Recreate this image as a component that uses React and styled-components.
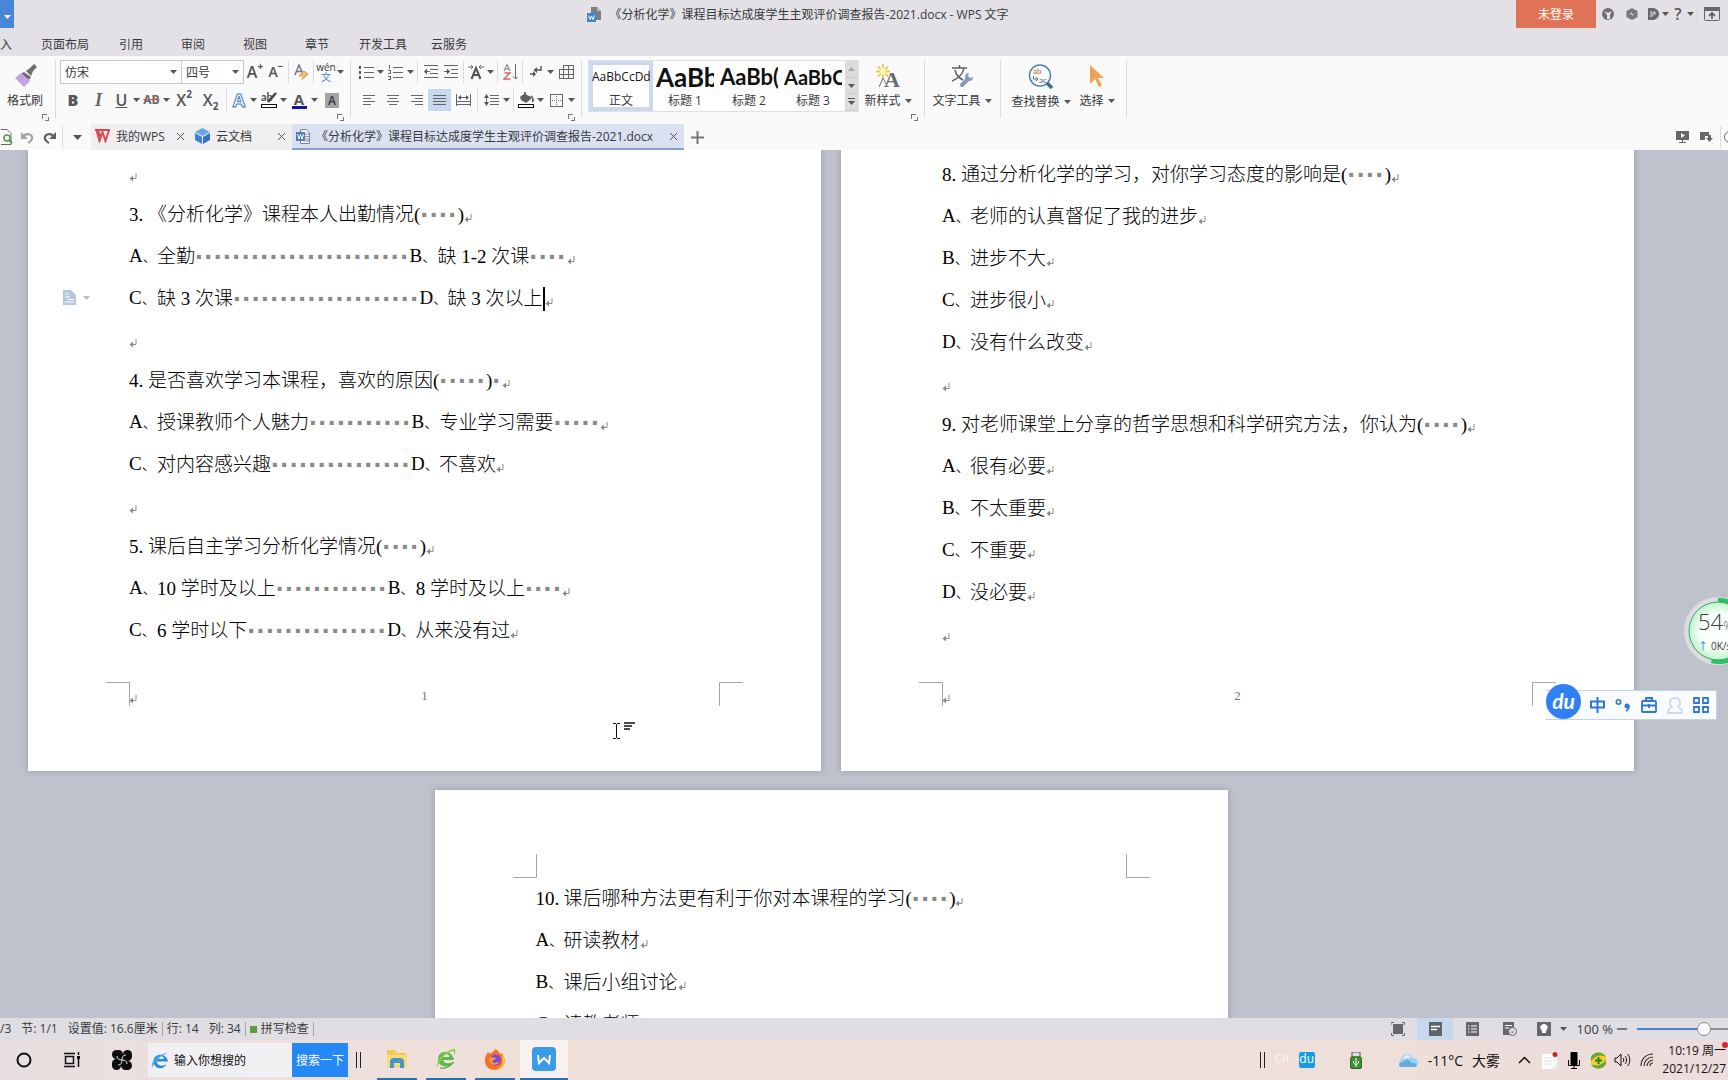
import React from 'react';
import styled, { createGlobalStyle, css } from 'styled-components';

const pageOne = [
    '',
    '3.《分析化学》课程本人出勤情况(····)',
    'A、全勤·······················B、缺 1-2 次课····',
    'C、缺 3 次课····················D、缺 3 次以上|',
    '',
    '4.是否喜欢学习本课程，喜欢的原因(·····)·',
    'A、授课教师个人魅力···········B、专业学习需要·····',
    'C、对内容感兴趣···············D、不喜欢',
    '',
    '5.课后自主学习分析化学情况(····)',
    'A、10 学时及以上············B、8 学时及以上····',
    'C、6 学时以下···············D、从来没有过',
];

const pageTwo = [
    '8.通过分析化学的学习，对你学习态度的影响是(····)',
    'A、老师的认真督促了我的进步',
    'B、进步不大',
    'C、进步很小',
    'D、没有什么改变',
    '',
    '9.对老师课堂上分享的哲学思想和科学研究方法，你认为(····)',
    'A、很有必要',
    'B、不太重要',
    'C、不重要',
    'D、没必要',
    '',
];

const pageThree = [
    '10.课后哪种方法更有利于你对本课程的学习(····)',
    'A、研读教材',
    'B、课后小组讨论',
    'C、请教老师',
];

const menus = ['页面布局', '引用', '审阅', '视图', '章节', '开发工具', '云服务'];

const docName = '《分析化学》课程目标达成度学生主观评价调查报告-2021.docx';

const Icon = ({ w = 16, h = 16, children, ...rest }) => (
    <svg width={w} height={h} viewBox={`0 0 ${w} ${h}`} fill="none" aria-hidden="true" {...rest}>
        {children}
    </svg>
);

const Arrow = ({ color = '#555' }) => (
    <Icon w={7} h={4}><path d="M0 0h7L3.5 4z" fill={color} /></Icon>
);

const CloseIcon = () => (
    <Icon w={9} h={9}><path d="M1 1l7 7M8 1L1 8" stroke="#555" /></Icon>
);

const Lines = ({ d, w = 14, h = 14, children }) => (
    <Icon w={w} h={h}>
        <path d={d} stroke="#666" strokeWidth="1" shapeRendering="crispEdges" />
        {children}
    </Icon>
);

const ReturnMark = () => (
    <Mark width="8" height="9" viewBox="0 0 8 9" aria-hidden="true">
        <path d="M7 0v5.5H1.5" stroke="#8a8a8a" fill="none" />
        <path d="M4 2.5L0.5 5.5 4 8.5z" fill="#8a8a8a" />
    </Mark>
);

const DocIcon = () => (
    <Icon w={14} h={15}>
        <path d="M4.5.5h6l3 3v11h-9z" fill="#eef1f6" stroke="#7c8798" />
        <path d="M9 5h4M9 7.500h4M9 10h4M9 12h4" stroke="#8b95a5" />
        <rect x="0" y="3" width="9" height="9" fill="#4f7fb5" />
        <path d="M1.500 5l1.500 5 1.500-4.500L6 10l1.500-5" stroke="#fff" />
    </Icon>
);

function Line({ text }) {
    const parts = text.split(/(·+|[A-D]、|^\d+\.|\|)/).filter(Boolean);
    return (
        <Paragraph $empty={!text}>
            {parts.map((part, i) => {
                if (part[0] === '·') return <Dots key={i}>{part}</Dots>;
                if (part === '|') return <TextCaret key={i} />;
                if (/^[A-D]、$/.test(part)) return <Marker key={i} $wide>{part[0]}<Comma>、</Comma></Marker>;
                if (/^\d+\.$/.test(part)) return <Marker key={i} $wide={part.length > 2}>{part}</Marker>;
                return <React.Fragment key={i}>{part}</React.Fragment>;
            })}
            <ReturnMark />
        </Paragraph>
    );
}

function Page({ lines, number, top }) {
    return (
        <Sheet>
            {top && <CropRow $top><Crop $side="left" $top /><Crop $side="right" $top /></CropRow>}
            <SheetBody $top={top}>
                {lines.map((line, i) => <Line key={i} text={line} />)}
            </SheetBody>
            {number && (
                <CropRow>
                    <Crop $side="left"><ReturnMark /></Crop>
                    <PageNumber>{number}</PageNumber>
                    <Crop $side="right" />
                </CropRow>
            )}
        </Sheet>
    );
}

function TitleBar() {
    return (
        <TitleRow>
            <AppMenu aria-label="应用菜单"><Arrow color="#fff" /></AppMenu>
            <WindowTitle>
                <Icon w={14} h={15}>
                    <path d="M4 0h6l4 4v9H4z" fill="#7d7d82" />
                    <path d="M10 0v4h4z" fill="#b9b9be" />
                    <rect x="0" y="6" width="9" height="9" fill="#3b87d6" />
                    <path d="M1.500 8.500l1.500 4L4.500 9 6 12.500l1.500-4" stroke="#fff" />
                </Icon>
                {docName} - WPS 文字
            </WindowTitle>
            <LoginButton>未登录</LoginButton>
            <TitleTools>
                <Tool $w={24} aria-label="皮肤">
                    <Icon w={12} h={12}><circle cx="6" cy="6" r="6" fill="#6e6e73" /><path d="M2 3l3 1.500h2L10 3 8 7v4H5V7z" fill="#e4e1e6" /></Icon>
                </Tool>
                <Tool $w={24} aria-label="设置">
                    <Icon w={12} h={12}><path d="M6 0l5.500 3v6L6 12 .5 9V3z" fill="#77777c" /><path d="M3 7l3-3v2.500L9 5 6 8V6z" fill="#dcdce0" /></Icon>
                </Tool>
                <Tool $w={18} aria-label="稻壳">
                    <Icon w={11} h={12}><path d="M0 0h5c8 1 8 11 0 12H0z" fill="#69696e" /><path d="M3 3v6l2-2V4l2 0v3" stroke="#e4e1e6" /></Icon>
                </Tool>
                <Tool $w={7} aria-label="稻壳选项"><Arrow /></Tool>
                <Tool $w={18} $glyph aria-label="帮助">?</Tool>
                <Tool $w={7} aria-label="帮助选项"><Arrow /></Tool>
                <Sep />
                <Tool $w={26} aria-label="隐藏功能区">
                    <Icon w={16} h={14}><rect x=".5" y=".5" width="15" height="13" rx="1" stroke="#66666b" /><path d="M0 0h16v4H0z" fill="#66666b" /><path d="M8 12V6.500M5 9l3-3 3 3" stroke="#55555a" strokeWidth="1.600" /></Icon>
                </Tool>
            </TitleTools>
        </TitleRow>
    );
}

function FontGroup() {
    return (
        <Group $pad="4px 6px 0 4px">
            <ToolRow $h={24}>
                <SelectBox $w={122}>
                    <select aria-label="字体" defaultValue="仿宋"><option>仿宋</option></select>
                    <Arrow />
                </SelectBox>
                <SelectBox $w={62} $joined>
                    <select aria-label="字号" defaultValue="四号"><option>四号</option></select>
                    <Arrow />
                </SelectBox>
                <Tool $w={22} $glyph aria-label="增大字号">A<Raised>+</Raised></Tool>
                <Tool $w={20} $glyph $small aria-label="减小字号">A<Raised>−</Raised></Tool>
                <Sep />
                <Tool $w={20} aria-label="清除格式">
                    <Icon w={15} h={16}>
                        <path d="M1 11L5 1l4 9M2.500 7.500h5" stroke="#75757f" strokeWidth="1.500" />
                        <path d="M5 12l5-5 4 3-5 5H7z" fill="#f3b878" stroke="#d99549" />
                        <path d="M6 12l3 3h-3l-1-2z" fill="#fff" />
                    </Icon>
                </Tool>
                <Sep />
                <Tool $w={20} $stack aria-label="拼音指南"><span>wén</span><em>文</em></Tool>
                <Tool $w={9} aria-label="拼音选项"><Arrow /></Tool>
            </ToolRow>
            <ToolRow $h={22}>
                <Tool $w={26} $glyph aria-label="加粗"><b>B</b></Tool>
                <Tool $w={25} $serif aria-label="倾斜"><i>I</i></Tool>
                <Tool $w={21} $glyph aria-label="下划线"><u>U</u></Tool>
                <Tool $w={9} aria-label="下划线选项"><Arrow /></Tool>
                <Tool $w={21} $strike aria-label="删除线">AB</Tool>
                <Tool $w={9} aria-label="删除线选项"><Arrow /></Tool>
                <Tool $w={26} $glyph aria-label="上标">X<Raised>2</Raised></Tool>
                <Tool $w={27} $glyph aria-label="下标">X<Raised $low>2</Raised></Tool>
                <Sep />
                <Tool $w={20} $outline aria-label="文字效果">A</Tool>
                <Tool $w={9} aria-label="文字效果选项"><Arrow /></Tool>
                <Tool $w={21} aria-label="突出显示">
                    <Icon w={16} h={16}>
                        <text x="0" y="9" fontSize="11" fontWeight="700" fontFamily="Lato, sans-serif" fill="#555">ab</text>
                        <path d="M15 1L7 10" stroke="#444" strokeWidth="2.500" />
                        <rect x=".5" y="12.500" width="15" height="3" fill="#fff" stroke="#111" />
                    </Icon>
                </Tool>
                <Tool $w={9} aria-label="突出显示选项"><Arrow /></Tool>
                <Tool $w={22} $fontColor aria-label="字体颜色">A</Tool>
                <Tool $w={9} aria-label="字体颜色选项"><Arrow /></Tool>
                <Tool $w={26} $shaded aria-label="字符底纹"><span>A</span></Tool>
            </ToolRow>
            <Launcher />
        </Group>
    );
}

function ParagraphGroup() {
    return (
        <Group $pad="4px 5px 0 6px">
            <ToolRow $h={24}>
                <Tool $w={19} aria-label="项目符号">
                    <Lines d="M5 2.500h10M5 7.500h10M5 12.500h10" w={15} h={15}><path d="M0 1h2v3H0zM0 6h2v3H0zM0 11h2v3H0z" fill="#555" /></Lines>
                </Tool>
                <Tool $w={9} aria-label="项目符号选项"><Arrow /></Tool>
                <Tool $w={21} aria-label="编号">
                    <Lines d="M5 2.500h10M5 7.500h10M5 12.500h10M1.500 0v4M0 5.500h2v3M0 8.500h3M0 11.500h2v3H0" w={15} h={15} />
                </Tool>
                <Tool $w={9} aria-label="编号选项"><Arrow /></Tool>
                <Sep />
                <Tool $w={21} aria-label="减少缩进">
                    <Lines d="M0 .5h14M6 4.500h8M6 8.500h8M0 12.500h14M2 6.500h4"><path d="M0 6.500l3-3v6z" fill="#555" /></Lines>
                </Tool>
                <Tool $w={20} aria-label="增加缩进">
                    <Lines d="M0 .5h14M7 4.500h7M7 8.500h7M0 12.500h14M0 6.500h4"><path d="M6 6.500l-3-3v6z" fill="#555" /></Lines>
                </Tool>
                <Sep />
                <Tool $w={20} aria-label="中文版式">
                    <Icon w={16} h={16}>
                        <path d="M3.500 15L8 4l4.500 11M5 11h6" stroke="#555" strokeWidth="2" />
                        <path d="M0 3h5M3 1l2 2-2 2M16 3h-5M13 1l-2 2 2 2" stroke="#666" />
                    </Icon>
                </Tool>
                <Tool $w={9} aria-label="中文版式选项"><Arrow /></Tool>
                <Sep />
                <Tool $w={20} aria-label="排序">
                    <Icon w={15} h={16}>
                        <path d="M1 7L4 .5 7 7M2 5h4" stroke="#77777c" />
                        <path d="M1.500 9h5.500l-6 6h6.500" stroke="#cc6666" strokeWidth="1.300" />
                        <path d="M12.500 0v15M10 12.500l2.500 2.500 2.500-2.500" stroke="#666" />
                    </Icon>
                </Tool>
                <Sep />
                <Tool $w={21} aria-label="显示段落标记">
                    <Icon w={14} h={14}>
                        <path d="M12 1v4H6M1 9h5" stroke="#555" strokeWidth="1.400" />
                        <path d="M8 2L4.500 5 8 8zM4 6v6l3-3z" fill="#555" />
                    </Icon>
                </Tool>
                <Tool $w={9} aria-label="段落标记选项"><Arrow /></Tool>
                <Tool $w={22} aria-label="表格">
                    <Lines d="M4.500 0v14M9.500 0v14M14.500 0v14M4 .5h11M0 4.500h15M0 9.500h15M0 13.500h15M.5 4v10" w={15} />
                </Tool>
            </ToolRow>
            <ToolRow $h={22}>
                <Tool $w={24} aria-label="左对齐"><Lines d="M0 1.500h12M0 4.500h8M0 7.500h12M0 10.500h8" w={12} h={12} /></Tool>
                <Tool $w={24} aria-label="居中"><Lines d="M0 1.500h12M2 4.500h8M0 7.500h12M2 10.500h8" w={12} h={12} /></Tool>
                <Tool $w={23} aria-label="右对齐"><Lines d="M0 1.500h12M4 4.500h8M0 7.500h12M4 10.500h8" w={12} h={12} /></Tool>
                <Tool $w={23} $active aria-label="两端对齐"><Lines d="M0 1.500h13M0 4.500h13M0 7.500h13M0 10.500h13" w={13} h={12} /></Tool>
                <Tool $w={24} aria-label="分散对齐">
                    <Lines d="M.5 0v12M14.500 0v12M3 3.500h9M0 7.500h15M0 10.500h15" w={15} h={12}><path d="M2 3.500l3-2.500v5zM13 3.500l-3-2.500v5z" fill="#555" /></Lines>
                </Tool>
                <Sep />
                <Tool $w={22} aria-label="行距">
                    <Lines d="M6 1.500h9M6 4.500h9M6 7.500h9M6 10.500h9M2.500 2v8" w={15} h={12}><path d="M0 4l2.500-4L5 4zM0 8l2.500 4L5 8z" fill="#555" /></Lines>
                </Tool>
                <Tool $w={9} aria-label="行距选项"><Arrow /></Tool>
                <Sep />
                <Tool $w={20} aria-label="底纹">
                    <Icon w={16} h={16}>
                        <path d="M2 5l5-3 6 3v2l-5 4-5-3z" fill="#5f5f64" />
                        <path d="M7 4V0M3 5l5-3M13 4c2 1 2 4 2 6" stroke="#5f5f64" strokeWidth="1.800" />
                        <rect x=".5" y="12.500" width="15" height="3" fill="#fff" stroke="#111" />
                    </Icon>
                </Tool>
                <Tool $w={9} aria-label="底纹选项"><Arrow /></Tool>
                <Tool $w={23} aria-label="边框">
                    <Icon w={13} h={13}>
                        <rect x=".5" y=".5" width="12" height="12" stroke="#666" />
                        <path d="M6.500 2v10M2 6.500h10" stroke="#777" strokeDasharray="1 1" />
                    </Icon>
                </Tool>
                <Tool $w={7} aria-label="边框选项"><Arrow /></Tool>
            </ToolRow>
            <Launcher />
        </Group>
    );
}

function Ribbon() {
    return (
        <RibbonBar>
            <Group $pad="4px 8px 0 2px">
                <BigTool $w={46}>
                    <Icon w={24} h={24}>
                        <path d="M13 7l4-3 4-4 3 3-4 4-2 5z" fill="#6c6c70" />
                        <path d="M11 8l7 5-2 3-8-6z" fill="#6c6c70" />
                        <path d="M8 9l9 8-6 6-9-9z" fill="#c4a2ea" />
                    </Icon>
                    <span>格式刷</span>
                </BigTool>
                <Launcher />
            </Group>
            <FontGroup />
            <ParagraphGroup />
            <Group $pad="4px 8px 0 6px">
                <BigRow>
                    <Gallery>
                        <StyleItem $selected><StyleSample $size={12}>AaBbCcDd</StyleSample>正文</StyleItem>
                        <StyleItem><StyleSample $size={26} $bold>AaBb</StyleSample>标题 1</StyleItem>
                        <StyleItem><StyleSample $size={22} $bold>AaBb(</StyleSample>标题 2</StyleItem>
                        <StyleItem><StyleSample $size={20} $bold>AaBbC</StyleSample>标题 3</StyleItem>
                        <GalleryScroll>
                            <button aria-label="上一行"><Icon w={7} h={4}><path d="M0 4h7L3.500 0z" fill="#aaa" /></Icon></button>
                            <button aria-label="下一行"><Arrow /></button>
                            <button aria-label="更多样式"><Icon w={7} h={8}><path d="M0 .5h7" stroke="#555" /><path d="M0 3h7L3.500 7z" fill="#555" /></Icon></button>
                        </GalleryScroll>
                    </Gallery>
                    <BigTool $w={58}>
                        <Icon w={26} h={24}>
                            <path d="M8 0v15M1 7.500h14M3 2.500l10 10M13 2.500l-10 10" stroke="#ecc94b" strokeWidth="1.800" strokeDasharray="4 1" />
                            <circle cx="8" cy="7.500" r="3" fill="#fff4b0" />
                            <text x="9" y="23" fontSize="22" fontWeight="700" fontFamily="Liberation Serif, serif" fill="#666a70">A</text>
                            <path d="M4 23l4-9 3 6" stroke="#777" />
                        </Icon>
                        <span>新样式<Arrow /></span>
                    </BigTool>
                </BigRow>
                <Launcher />
            </Group>
            <Group $pad="4px 8px 0 6px">
                <BigTool $w={62}>
                    <Icon w={24} h={24}>
                        <path d="M2 4h15M9.500 1v3M14 4c-1 6-5 10-12 13M5 6c1 5 4 8 8 10" stroke="#606064" strokeWidth="1.500" />
                        <path d="M12 21l6-6" stroke="#8b97bd" strokeWidth="4" strokeLinecap="round" />
                        <path d="M23 13a4 4 0 1 1-4-4l-1 3 2 2z" fill="#8b97bd" />
                    </Icon>
                    <span>文字工具<Arrow /></span>
                </BigTool>
            </Group>
            <Group $pad="4px 6px 0 8px">
                <BigRow>
                    <BigTool $w={64}>
                        <Icon w={26} h={25}>
                            <circle cx="12" cy="11.500" r="10.500" stroke="#4c82ab" strokeWidth="1.400" />
                            <path d="M19 19l5 5" stroke="#3c6fa0" strokeWidth="3.500" />
                            <text x="5" y="10" fontSize="8" fontFamily="Lato, sans-serif" fill="#c85f32">ab</text>
                            <text x="11" y="19" fontSize="8" fontFamily="Lato, sans-serif" fill="#3b6e9d">ac</text>
                            <path d="M5.500 12v3h4M8 13l2 2-2 2" stroke="#3b6e9d" />
                        </Icon>
                        <span>查找替换<Arrow /></span>
                    </BigTool>
                    <BigTool $w={48}>
                        <Icon w={16} h={24}>
                            <path d="M1 1v19l5-5 4 8 3-2-4-7h6z" fill="#f0a25c" />
                        </Icon>
                        <span>选择<Arrow /></span>
                    </BigTool>
                </BigRow>
            </Group>
        </RibbonBar>
    );
}

function TabBar() {
    return (
        <TabRow>
            <QuickTools>
                <Tool $w={16} aria-label="打印预览">
                    <Icon w={14} h={16}><path d="M0 .5h6l4 4v11H0" stroke="#666" /><circle cx="6" cy="9" r="3" stroke="#4b9a46" strokeWidth="1.400" /><path d="M8 11l3 3" stroke="#4b9a46" strokeWidth="2" /></Icon>
                </Tool>
                <Tool $w={22} aria-label="撤销">
                    <Icon w={13} h={13}><path d="M2 6c3-5 10-3 9 2-1 2-2 3-4 4" stroke="#a3a3a8" strokeWidth="2.200" /><path d="M0 1v7h7z" fill="#a3a3a8" /></Icon>
                </Tool>
                <Tool $w={22} aria-label="恢复">
                    <Icon w={13} h={13}><path d="M11 6C8 1 1 3 2 8c1 2 2 3 4 4" stroke="#606065" strokeWidth="2.200" /><path d="M13 1v7H6z" fill="#606065" /></Icon>
                </Tool>
                <Sep />
                <Tool $w={24} aria-label="自定义快速访问工具栏"><Icon w={9} h={5}><path d="M0 0h9L4.500 5z" fill="#555" /></Icon></Tool>
            </QuickTools>
            <Tab $w={100}>
                <button>
                    <Icon w={15} h={14}><path d="M0 1h15" stroke="#d9484c" strokeWidth="2" /><path d="M1.500 1l3 11L7.500 3l3 9 3.500-11M3 1l3 8" stroke="#dd4b50" strokeWidth="2" /></Icon>
                    我的WPS
                </button>
                <CloseTab aria-label="关闭我的WPS"><CloseIcon /></CloseTab>
            </Tab>
            <Tab $w={101}>
                <button>
                    <Icon w={15} h={16}><path d="M7.500 0L15 4 7.500 8 0 4z" fill="#6aa5f0" /><path d="M0 5l7 4v7l-7-4z" fill="#3e7de0" /><path d="M15 5L8 9v7l7-4z" fill="#3470d2" /></Icon>
                    云文档
                </button>
                <CloseTab aria-label="关闭云文档"><CloseIcon /></CloseTab>
            </Tab>
            <Tab $w={392} $active>
                <button><DocIcon />{docName}</button>
                <CloseTab aria-label="关闭文档"><CloseIcon /></CloseTab>
            </Tab>
            <Tool $w={26} aria-label="新建"><Icon w={13} h={13}><path d="M6.500 0v13M0 6.500h13" stroke="#777" strokeWidth="2" /></Icon></Tool>
            <TabTools>
                <Tool $w={24} aria-label="播放">
                    <Icon w={13} h={12}><path d="M0 0h13v9H0zM3 11h7v1H3zM6 9h1v2H6z" fill="#66666b" /><path d="M5 2l4 2.500L5 7z" fill="#fafafa" /></Icon>
                </Tool>
                <Tool $w={24} aria-label="窗口排列">
                    <Icon w={13} h={12}><path d="M0 1h9v4H5v4H0z" fill="#66666b" /><path d="M6 7h7l-3.500 4zM8 4h3v3H8z" fill="#66666b" /></Icon>
                </Tool>
                <Sep />
                <Icon w={5} h={12}><circle cx="7" cy="6" r="5.500" stroke="#666" /></Icon>
            </TabTools>
        </TabRow>
    );
}

function StatusBar() {
    return (
        <StatusRow>
            <StatusText>/3</StatusText>
            <StatusText>节: 1/1</StatusText>
            <StatusText>设置值: 16.6厘米</StatusText>
            <StatusText $rule>行: 14</StatusText>
            <StatusText>列: 34</StatusText>
            <StatusText $rule><SpellDot />拼写检查</StatusText>
            <StatusText $rule>&nbsp;</StatusText>
            <ViewTools>
                <Tool $w={38} aria-label="全屏显示">
                    <Icon w={14} h={14}><rect x="2" y="2" width="10" height="10" fill="#66666b" /><path d="M0 3V.5h3M11 .5h2.500V3M13.500 11v2.500H11M3 13.500H.5V11" stroke="#66666b" /></Icon>
                </Tool>
                <Tool $w={36} $active aria-label="页面视图">
                    <Icon w={13} h={14}><path d="M0 0h13v14H0z" fill="#5f646c" /><path d="M2 4.500h9M2 7.500h6" stroke="#fff" strokeWidth="1.400" /></Icon>
                </Tool>
                <Tool $w={38} aria-label="大纲视图">
                    <Icon w={13} h={14}><path d="M0 0h13v14H0z" fill="#66666b" /><path d="M2 4h1.500M5 4h6M2 7h1.500M5 7h6M2 10h1.500M5 10h6" stroke="#fff" strokeWidth="1.200" /></Icon>
                </Tool>
                <Tool $w={38} aria-label="Web版式">
                    <Icon w={14} h={14}><path d="M0 0h11v13H0z" fill="#66666b" /><path d="M2 3.500h7M2 6h4" stroke="#fff" /><circle cx="9.500" cy="9.500" r="4" fill="#e0dee3" stroke="#66666b" /><path d="M8 9.500h3l-2 2z" fill="#66666b" /></Icon>
                </Tool>
                <Tool $w={30} aria-label="护眼模式">
                    <Icon w={14} h={14}><path d="M0 0h14v14H0z" fill="#66666b" /><path d="M5 11V9c-4-5 0-7 2-7s6 2 2 7v2z" fill="#fff" /></Icon>
                </Tool>
                <Tool $w={8} aria-label="护眼选项"><Arrow /></Tool>
                <ZoomText>100 %</ZoomText>
                <Tool $w={18} aria-label="缩小"><Icon w={10} h={2}><path d="M0 0h10v2H0z" fill="#77777c" /></Icon></Tool>
                <ZoomSlider type="range" min="0" max="100" defaultValue="75" aria-label="显示比例" />
            </ViewTools>
        </StatusRow>
    );
}

function TaskBar() {
    return (
        <TaskRow>
            <TaskButton $w={48} aria-label="语音助手"><Icon w={16} h={16}><circle cx="8" cy="8" r="6.500" stroke="#111" strokeWidth="2" /></Icon></TaskButton>
            <TaskButton $w={48} aria-label="任务视图">
                <Icon w={17} h={16}><path d="M0 1.500h11M0 14.500h11M1.500 4.500h8v7h-8zM14.500 0v3M14.500 7v8" stroke="#111" strokeWidth="1.500" /><path d="M13 4h3v3h-3z" fill="#111" /></Icon>
            </TaskButton>
            <TaskButton $w={52} aria-label="启动器">
                <Icon w={20} h={20}>
                    <rect x="0" y="0" width="11" height="9" rx="4.500" fill="#0b0b0b" />
                    <rect x="11" y="0" width="9" height="11" rx="4.500" fill="#0b0b0b" />
                    <rect x="9" y="11" width="11" height="9" rx="4.500" fill="#0b0b0b" />
                    <rect x="0" y="9" width="9" height="11" rx="4.500" fill="#0b0b0b" />
                    <path d="M5 5h10v10H5z" fill="#0b0b0b" />
                    <path d="M10 10c-3 0-5-1-5-4M10 10c0-3 1-5 4-5M10 10c3 0 5 1 5 4M10 10c0 3-1 5-4 5" stroke="#eadbd7" />
                </Icon>
            </TaskButton>
            <SearchBox>
                <Icon w={19} h={19}>
                    <path d="M17 10.500H5.500c1 5 7 5 10 2.500-2 6-13 6-13-3 0-8 13-9 14.500.5z" fill="#2b8ade" />
                    <path d="M6 8h7c-1-4-6-4-7 0z" fill="#f0f0f2" />
                    <path d="M1 17C-1 10 9 2 18 2c-6 1-14 7-17 15z" fill="#4ba6ec" />
                </Icon>
                <input aria-label="搜索" defaultValue="输入你想搜的" />
                <button>搜索一下</button>
            </SearchBox>
            <Grip />
            <AppButtons>
                <TaskButton $w={40} $open aria-label="文件资源管理器">
                    <Icon w={22} h={20}><path d="M1 1h8l2 3h9v14H1z" fill="#f3cb54" /><path d="M1 6h20v11H1z" fill="#fadb78" /><path d="M4 19v-7c0-2 2-3 4-3h6c2 0 4 1 4 3v7h-4v-5H8v5z" fill="#4796c8" /></Icon>
                </TaskButton>
                <TaskButton $w={40} $open aria-label="浏览器">
                    <Icon w={20} h={22}><path d="M18 12H7c1 4 6 4 10 2-2 7-15 6-15-3S16 1 18 12z" fill="#5fb846" /><path d="M6.500 9h7c-1-4-6-3-7 0z" fill="#fff" /><path d="M1 20C-1 12 11 1 19 1c1 2 0 4-1 6 0-3 0-4-1-4C10 4 3 13 1 20z" fill="#8ad04f" /><path d="M4 20c6 1 11-2 14-6" stroke="#3f9638" /></Icon>
                </TaskButton>
                <TaskButton $w={40} $open aria-label="Firefox">
                    <Icon w={23} h={22}><path d="M11 22C4 22 0 17 1 11c0-3 2-5 3-7l2 2c2-2 4-2 5-5 3 1 4 3 5 5l2-1c4 5 5 16-7 17z" fill="#fb6f2c" /><path d="M18 5c4 5 5 16-7 17 10-4 7-10 7-17z" fill="#ffc63a" /><circle cx="11.500" cy="12" r="5.500" fill="#7a4bd6" /><path d="M5 10c3-2 4 0 7 0-1 2-3 2-4 3 1 3 5 2 7 0-1 6-10 5-10-3z" fill="#ff9a35" /></Icon>
                </TaskButton>
                <TaskButton $w={48} $open $current aria-label="WPS">
                    <Icon w={24} h={24}><rect width="24" height="24" rx="4" fill="#3a9bea" /><path d="M6 8l1 8 5-5 5 5 1-8" stroke="#fff" strokeWidth="2" /></Icon>
                </TaskButton>
            </AppButtons>
            <Tray>
                <Grip />
                <InputMode>CH</InputMode>
                <DuBadge>du</DuBadge>
                <UsbButton $w={58} aria-label="USB">
                    <Icon w={12} h={17}><path d="M2 0h8v5H2z" fill="#ddd" stroke="#555" /><rect x=".5" y="5" width="11" height="11.500" rx="1.500" fill="#3b922f" stroke="#286520" /><path d="M6 6v9M3.500 9v2L6 13l2.500-2V9" stroke="#fff" /></Icon>
                </UsbButton>
                <Weather>
                    <Icon w={22} h={16}><path d="M4 15a4 4 0 0 1 0-7c1-7 10-8 11-2 7-1 8 8 3 9z" fill="#9fd0ef" /><path d="M5 15c-5-1-3-5 1-5 3-4 8-2 8 1 5-1 7 3 4 4z" fill="#62ade0" /><path d="M6 7c1-5 7-5 8-1-4-1-5 1-8 1z" fill="#dff1fb" /></Icon>
                    <span>-11°C</span><span>大雾</span>
                </Weather>
                <TaskButton $w={28} aria-label="显示隐藏的图标"><Icon w={13} h={8}><path d="M1 7l5.500-5.500L12 7" stroke="#111" strokeWidth="1.500" /></Icon></TaskButton>
                <TaskButton $w={24} aria-label="便笺">
                    <Icon w={17} h={17}><path d="M0 2h14v15H0z" fill="#fff" /><path d="M11 5h5v11h-5" fill="#f4f4f4" stroke="#ddd" /><path d="M2 6h7M2 9h8M2 12h7" stroke="#ddd" /><circle cx="13" cy="2.500" r="2.500" fill="#cc2727" /></Icon>
                </TaskButton>
                <TaskButton $w={24} aria-label="麦克风"><Icon w={12} h={17}><rect x="2.500" width="7" height="13" rx="1" fill="#000" /><path d="M.5 8v5.500h11V8M6 13v3M3 16.500h6" stroke="#000" /></Icon></TaskButton>
                <TaskButton $w={24} aria-label="安全卫士"><Icon w={17} h={17}><circle cx="8.500" cy="8.500" r="8" fill="#f3d022" /><path d="M1 5c3-6 12-6 15 0-6-3-11-1-15 4zM16 12c-3 6-12 6-15 0 6 3 11 1 15-4z" fill="#5cab35" /><path d="M8.500 5v7M5 8.500h7" stroke="#277c25" strokeWidth="2" /></Icon></TaskButton>
                <TaskButton $w={24} aria-label="音量"><Icon w={17} h={14}><path d="M1 5v4h2l4 4V1L3 5z" stroke="#111" /><path d="M9 5c1 1 1 3 0 4M11 3c2 2 2 6 0 8M13.500 1c3 3 3 9 0 12" stroke="#111" /></Icon></TaskButton>
                <TaskButton $w={26} aria-label="网络"><Icon w={14} h={14}><path d="M1 13C1 6 6 1 13 1M4 13c0-5 4-9 9-9M7 13c0-3 3-6 6-6M10 13c0-2 1-3 3-3" stroke="#333" strokeWidth="1.200" /></Icon></TaskButton>
                <Clock><span>10:19 周一</span><span>2021/12/27</span><Notice /></Clock>
            </Tray>
        </TaskRow>
    );
}

function InputMethodBar() {
    return (
        <ImeBar>
            <ImeLogo>du</ImeLogo>
            <button aria-label="中文"><Icon w={15} h={16}><path d="M1 4.500h13v6H1zM7.500 0v16" stroke="#2f78d0" strokeWidth="2" /></Icon></button>
            <button aria-label="标点"><Icon w={16} h={16}><circle cx="3.500" cy="5" r="2.200" stroke="#2f78d0" strokeWidth="1.600" /><circle cx="12" cy="9" r="2.500" fill="#2f78d0" /><path d="M14 9c0 3-1 4-3 5" stroke="#2f78d0" strokeWidth="1.500" /></Icon></button>
            <button aria-label="工具箱"><Icon w={16} h={16}><rect x="1" y="4" width="14" height="11" rx="1" stroke="#2f78d0" strokeWidth="1.800" /><path d="M5 4V1h6v3M1 8.500h14M8 7v4" stroke="#2f78d0" strokeWidth="1.800" /></Icon></button>
            <button aria-label="账户"><Icon w={16} h={17}><path d="M5 10C1 6 3 1 8 1s7 5 3 9c3 1 4 3 4 6H1c0-3 1-5 4-6z" stroke="#c8dbf3" strokeWidth="1.800" /></Icon></button>
            <button aria-label="更多"><Icon w={16} h={16}><path d="M1 1h5v5H1zM10 1h5v5h-5zM1 10h5v5H1zM10 10h5v5h-5z" stroke="#2f78d0" strokeWidth="1.800" /></Icon></button>
        </ImeBar>
    );
}

function App() {
    return (
        <Window>
            <GlobalStyle />
            <TitleBar />
            <MenuRow>
                <MenuItem $clipped>入</MenuItem>
                {menus.map((menu) => <MenuItem key={menu}>{menu}</MenuItem>)}
            </MenuRow>
            <Ribbon />
            <TabBar />
            <Workspace>
                <Spread>
                    <Page lines={pageOne} number="1" />
                    <Page lines={pageTwo} number="2" />
                </Spread>
                <Spread>
                    <Page lines={pageThree} top />
                </Spread>
                <PasteHint aria-label="段落布局">
                    <Icon w={13} h={15}><path d="M0 0h8l5 5v10H0z" fill="#b4c6dc" /><path d="M2 4h4M2 7h5M5 9.500h6M2 12h9" stroke="#fff" /></Icon>
                    <Arrow color="#b5bcc8" />
                </PasteHint>
                <Pointer width="24" height="20" viewBox="0 0 24 20" fill="none" aria-hidden="true">
                    <path d="M0 2.500h3M4 2.500h3M3.500 3v14M0 17.500h3M4 17.500h3" stroke="#111" />
                    <path d="M11 2h11M11 5h8M11 8h6" stroke="#111" strokeWidth="1.500" />
                </Pointer>
            </Workspace>
            <StatusBar />
            <TaskBar />
            <InputMethodBar />
            <SpeedBall>
                <svg width="68" height="68" viewBox="0 0 68 68" aria-hidden="true">
                    <defs>
                        <radialGradient id="ball">
                            <stop offset="0.600" stopColor="#fbfffb" />
                            <stop offset="1" stopColor="#bdf3ca" />
                        </radialGradient>
                    </defs>
                    <circle cx="34" cy="34" r="34" fill="#dcdce2" />
                    <path d="M34 1a33 33 0 1 1-7 65l7-32z" fill="#2fc064" />
                    <circle cx="34" cy="34" r="29" fill="url(#ball)" stroke="#35ac60" />
                </svg>
                <BallText><strong>54<small>%</small></strong><span><i>↑</i>0K/s</span></BallText>
            </SpeedBall>
        </Window>
    );
}

const GlobalStyle = createGlobalStyle`
    * {
        box-sizing: border-box;
    }

    body {
        margin: 0;
        font-family: "Open Sans", "Noto Sans CJK SC", sans-serif;
        font-size: 12px;
        color: #39393c;
    }

    button, input, select {
        font: inherit;
        color: inherit;
        border: none;
        background: none;
        padding: 0;
        margin: 0;
    }

    svg {
        flex: none;
    }
`;

const Window = styled.div`
    position: relative;
    display: flex;
    flex-direction: column;
    height: 100vh;
    overflow: hidden;
    background: #fafafa;
`;

const TitleRow = styled.header`
    display: flex;
    align-items: stretch;
    height: 28px;
    flex: none;
    background: #e4e1e6;
`;

const AppMenu = styled.button`
    width: 14px;
    background: #4a86d8;
`;

const WindowTitle = styled.div`
    display: flex;
    flex: 1;
    align-items: center;
    justify-content: center;
    gap: 8px;
    padding-left: 66px;
    white-space: nowrap;
`;

const LoginButton = styled.button`
    width: 80px;
    background: #e07356;
    color: #fff;
`;

const TitleTools = styled.div`
    display: flex;
    align-items: center;
    width: 132px;
`;

const MenuRow = styled.nav`
    display: flex;
    height: 28px;
    flex: none;
    background: #e4e1e6;
`;

const MenuItem = styled.button`
    min-width: 62px;
    padding: 4px 11px 0;

    ${({ $clipped }) => $clipped && css`
        min-width: 30px;
        padding: 4px 0 0;
        text-align: left;
    `}
`;

const RibbonBar = styled.div`
    display: flex;
    height: 68px;
    flex: none;
    background: #fafafa;
`;

const Group = styled.div`
    position: relative;
    display: flex;
    flex-direction: column;
    gap: 5px;
    padding: ${({ $pad }) => $pad};

    &::after {
        content: '';
        position: absolute;
        right: 0;
        top: 4px;
        height: 58px;
        border-right: 1px solid #dcdcde;
    }
`;

const Launcher = styled.span`
    position: absolute;
    right: 9px;
    bottom: 5px;
    width: 5px;
    height: 5px;
    border-top: 1px solid #777;
    border-left: 1px solid #777;

    &::after {
        content: '';
        position: absolute;
        left: 2px;
        top: 2px;
        width: 3px;
        height: 3px;
        border-right: 1px solid #777;
        border-bottom: 1px solid #777;
    }
`;

const ToolRow = styled.div`
    display: flex;
    align-items: center;
    height: ${({ $h }) => $h}px;
`;

const Sep = styled.span`
    flex: none;
    width: 1px;
    height: 22px;
    margin: 0 2px;
    background: #dcdcde;
`;

const Raised = styled.sup`
    font-size: 10px;
    line-height: 10px;
    font-weight: 700;
    align-self: ${({ $low }) => ($low ? 'flex-end' : 'flex-start')};
`;

const Tool = styled.button`
    display: flex;
    flex: none;
    align-items: center;
    justify-content: center;
    width: ${({ $w }) => $w}px;
    height: 22px;
    line-height: 20px;

    ${({ $active }) => $active && css`
        background: #c7d7ee;
    `}

    ${({ $glyph, $small }) => $glyph && css`
        font-weight: 600;
        font-size: ${$small ? 14 : 16}px;
        color: #55555a;
    `}

    ${({ $serif }) => $serif && css`
        font-family: "Liberation Serif", serif;
        font-weight: 700;
        font-size: 18px;
        color: #66666a;
    `}

    ${({ $stack }) => $stack && css`
        flex-direction: column;
        line-height: 10px;
        font-size: 10px;

        em {
            font-style: normal;
            color: #4f83bd;
        }
    `}

    ${({ $strike }) => $strike && css`
        font-weight: 700;
        color: #66666a;
        text-decoration: line-through #d05555;
    `}

    ${({ $outline }) => $outline && css`
        font-weight: 700;
        font-size: 18px;
        color: #fff;
        -webkit-text-stroke: 1px #4a78c0;
    `}

    ${({ $fontColor }) => $fontColor && css`
        font-weight: 700;
        font-size: 15px;
        line-height: 14px;
        color: #55555a;
        height: 17px;
        background: linear-gradient(#1414a0, #1414a0) center bottom / 15px 3px no-repeat;
        padding-bottom: 3px;
    `}

    ${({ $shaded }) => $shaded && css`
        span {
            width: 14px;
            height: 15px;
            line-height: 15px;
            background: #a3a3a8;
            font-weight: 600;
        }
    `}
`;

const SelectBox = styled.div`
    display: flex;
    align-items: center;
    width: ${({ $w }) => $w}px;
    height: 24px;
    padding-right: 4px;
    border: 1px solid #c6c6ca;
    border-left-width: ${({ $joined }) => ($joined ? 0 : 1)}px;
    background: #fff;

    select {
        flex: 1;
        min-width: 0;
        padding-left: 4px;
        appearance: none;
        outline: none;
    }
`;

const BigRow = styled.div`
    display: flex;
`;

const BigTool = styled.button`
    display: flex;
    flex-direction: column;
    align-items: center;
    gap: 4px;
    width: ${({ $w }) => $w}px;
    padding-top: 4px;

    span {
        display: flex;
        align-items: center;
        gap: 4px;
        line-height: 18px;
        white-space: nowrap;
    }
`;

const Gallery = styled.div`
    display: flex;
    height: 52px;
    background: #fff;
    border: 1px solid #e0e0e3;
`;

const StyleItem = styled.button`
    display: flex;
    flex-direction: column;
    align-items: center;
    width: 64px;
    padding: 0 3px;
    overflow: hidden;
    line-height: 16px;
    box-shadow: ${({ $selected }) => ($selected ? 'inset 0 0 0 4px #ccd8ec' : 'none')};
`;

const StyleSample = styled.span`
    width: 58px;
    overflow: hidden;
    font-family: ${({ $bold }) => ($bold ? 'Lato' : '"Open Sans"')}, sans-serif;
    font-size: ${({ $size }) => $size}px;
    font-weight: ${({ $bold }) => ($bold ? 700 : 400)};
    line-height: 32px;
    height: 32px;
    white-space: nowrap;
    text-align: left;
    color: #111;
`;

const GalleryScroll = styled.div`
    display: flex;
    flex-direction: column;
    width: 13px;
    background: #dddde0;

    button {
        display: flex;
        flex: 1;
        align-items: center;
        justify-content: center;
        border-bottom: 1px solid #cbcbd0;
    }
`;

const TabRow = styled.div`
    display: flex;
    align-items: center;
    height: 26px;
    flex: none;
    background: #fafafa;
`;

const QuickTools = styled.div`
    display: flex;
    align-items: center;
    width: 91px;
`;

const Tab = styled.div`
    display: flex;
    align-items: center;
    justify-content: space-between;
    width: ${({ $w }) => $w}px;
    height: 26px;
    padding: 0 4px;
    background: ${({ $active }) => ($active ? '#dae2f1' : '#efeef1')};
    border-bottom: 2px solid ${({ $active }) => ($active ? '#8ba0c8' : '#efeef1')};

    button {
        display: flex;
        align-items: center;
        gap: 6px;
        white-space: nowrap;
    }
`;

const CloseTab = styled.button`
    justify-content: center;
    padding: 2px;
`;

const TabTools = styled.div`
    display: flex;
    align-items: center;
    margin-left: auto;
`;

const Workspace = styled.main`
    position: relative;
    flex: 1;
    min-height: 0;
    overflow: hidden;
    padding-right: 66px;
    background: #bfc1cc;
`;

const Spread = styled.div`
    display: flex;
    justify-content: center;
    gap: 20px;
    margin-bottom: 19px;
`;

const Sheet = styled.article`
    flex: none;
    width: 793px;
    padding: 0 101px 65px;
    background: #fff;
    box-shadow: 0 0 6px 1px #a2a4b0;
    font-family: "Liberation Serif", "Noto Sans CJK SC", serif;
    font-weight: 300;
    font-size: 19px;
    color: #000;
`;

const SheetBody = styled.div`
    min-height: ${({ $top }) => ($top ? 0 : 504)}px;
    padding-top: ${({ $top }) => ($top ? 0 : 4)}px;
    margin-bottom: 28px;
`;

const Paragraph = styled.p`
    display: flex;
    align-items: center;
    margin: 0;
    height: ${({ $empty }) => ($empty ? 40 : 42)}px;
    line-height: 42px;
    white-space: pre;
`;

const Marker = styled.span`
    flex: none;
    width: ${({ $wide }) => ($wide ? 28 : 19)}px;
`;

const Comma = styled.span`
    font-size: 14px;
`;

/* shown spaces, each half an ideograph wide */
const Dots = styled.span`
    font-family: "Liberation Sans", sans-serif;
    font-weight: 700;
    font-size: 28px;
    line-height: 28px;
    color: #8a8a8a;
`;

const TextCaret = styled.span`
    width: 2px;
    height: 24px;
    background: #000;
`;

const Mark = styled.svg`
    margin-top: 6px;
`;

const CropRow = styled.div`
    display: flex;
    justify-content: space-between;
    height: ${({ $top }) => ($top ? 88 : 24)}px;
    align-items: flex-end;
    margin: 0 -23px;
`;

const Crop = styled.span`
    display: flex;
    width: 24px;
    height: 24px;
    border: 0 solid #a6a6a6;
    border-${({ $top }) => ($top ? 'bottom' : 'top')}-width: 1px;
    border-${({ $side }) => ($side === 'left' ? 'right' : 'left')}-width: 1px;

    svg {
        flex: none;
        margin: 12px 0 0 23px;
    }
`;

const PageNumber = styled.span`
    font-size: 13px;
    line-height: 20px;
    color: #777;
`;

const PasteHint = styled.button`
    position: absolute;
    left: 63px;
    top: 140px;
    display: flex;
    align-items: center;
    gap: 7px;
`;

const Pointer = styled.svg`
    position: absolute;
    left: 613px;
    top: 571px;
`;

const StatusRow = styled.footer`
    display: flex;
    align-items: center;
    height: 22px;
    flex: none;
    background: #e0dee3;
`;

const StatusText = styled.span`
    display: flex;
    align-items: center;
    gap: 4px;
    padding-right: 10px;
    white-space: nowrap;
    line-height: 14px;

    ${({ $rule }) => $rule && css`
        margin-left: -6px;
        padding-left: 4px;
        border-left: 1px solid #a5a5a8;
    `}
`;

const SpellDot = styled.i`
    width: 7px;
    height: 7px;
    background: #55a03c;
`;

const ViewTools = styled.div`
    display: flex;
    align-items: center;
    margin-left: auto;
`;

const ZoomText = styled.span`
    width: 46px;
    text-align: right;
    font-size: 13px;
`;

const ZoomSlider = styled.input`
    appearance: none;
    width: 94px;
    height: 16px;
    margin-left: 6px;
    margin-right: -3px;
    background: linear-gradient(90deg, #4d84d0 72%, #8e8e93 72%) center / 100% 2px no-repeat;

    &::-webkit-slider-thumb {
        appearance: none;
        width: 14px;
        height: 14px;
        border-radius: 7px;
        border: 1px solid #8b8b90;
        background: #fff;
    }
`;

const TaskRow = styled.footer`
    display: flex;
    align-items: center;
    height: 40px;
    flex: none;
    background: linear-gradient(90deg, #e9dfe0, #f0e0da 30%, #efe0da 70%, #ecdcda);
    color: #111;
`;

const TaskButton = styled.button`
    display: flex;
    align-items: center;
    justify-content: center;
    width: ${({ $w }) => $w}px;
    height: 40px;
    background: ${({ $current }) => ($current ? '#f8f1f0' : 'none')};
    border-bottom: ${({ $open }) => ($open ? '2px solid #2a6fb4' : 'none')};
`;

const UsbButton = styled(TaskButton)`
    margin: 0 12px;
`;

const SearchBox = styled.div`
    display: flex;
    align-items: center;
    gap: 4px;
    height: 34px;
    padding-left: 3px;
    margin-right: 8px;
    background: #f0eff2;

    input {
        width: 114px;
        outline: none;
    }

    button {
        width: 56px;
        height: 34px;
        background: #2488f7;
        color: #fff;
    }
`;

const Grip = styled.span`
    width: 5px;
    height: 16px;
    border: solid #222;
    border-width: 0 1px;
`;

const AppButtons = styled.div`
    display: flex;
    gap: 9px;
    margin-left: 16px;

    button:last-child {
        margin-left: -4px;
    }
`;

const Tray = styled.div`
    display: flex;
    align-items: center;
    margin-left: auto;
`;

const InputMode = styled.span`
    width: 34px;
    text-align: center;
    color: #f8f4f4;
    font-family: "Liberation Mono", monospace;
`;

const DuBadge = styled.span`
    width: 16px;
    height: 16px;
    line-height: 14px;
    border-radius: 2px;
    background: #149be4;
    color: #fff;
    text-align: center;
`;

const Weather = styled.button`
    display: flex;
    align-items: center;
    gap: 9px;
    padding-right: 10px;
    font-size: 14px;
`;

const Clock = styled.div`
    position: relative;
    display: flex;
    flex-direction: column;
    align-items: flex-end;
    width: 68px;
    padding-right: 2px;
    line-height: 18px;
    white-space: nowrap;
`;

const Notice = styled.i`
    position: absolute;
    right: 0;
    top: 0;
    width: 6px;
    height: 6px;
    border-radius: 3px;
    background: #d12b2b;
`;

const ImeBar = styled.div`
    position: absolute;
    right: 11px;
    top: 690px;
    display: flex;
    align-items: center;
    height: 30px;
    padding: 0 2px 0 38px;
    background: #fafbfe;
    border: 1px solid #c2d2ee;
    border-left: none;

    button {
        display: flex;
        align-items: center;
        justify-content: center;
        width: 26px;
    }
`;

const ImeLogo = styled.span`
    position: absolute;
    left: 0;
    bottom: 0;
    width: 35px;
    height: 35px;
    line-height: 33px;
    border-radius: 18px;
    background: #2f80f5;
    color: #fff;
    font-family: Lato, sans-serif;
    font-weight: 700;
    font-style: italic;
    font-size: 21px;
    text-align: center;
`;

const SpeedBall = styled.div`
    position: absolute;
    right: -24px;
    top: 597px;
`;

const BallText = styled.div`
    position: absolute;
    left: 14px;
    top: 12px;
    display: flex;
    flex-direction: column;
    white-space: nowrap;

    strong {
        font-weight: 300;
        font-size: 22px;
        line-height: 24px;
    }

    small {
        font-size: 12px;
    }

    span {
        display: flex;
        gap: 3px;
        font-size: 10px;
        line-height: 16px;
    }

    i {
        font-style: normal;
        color: #2f78d0;
    }
`;

export default App;
